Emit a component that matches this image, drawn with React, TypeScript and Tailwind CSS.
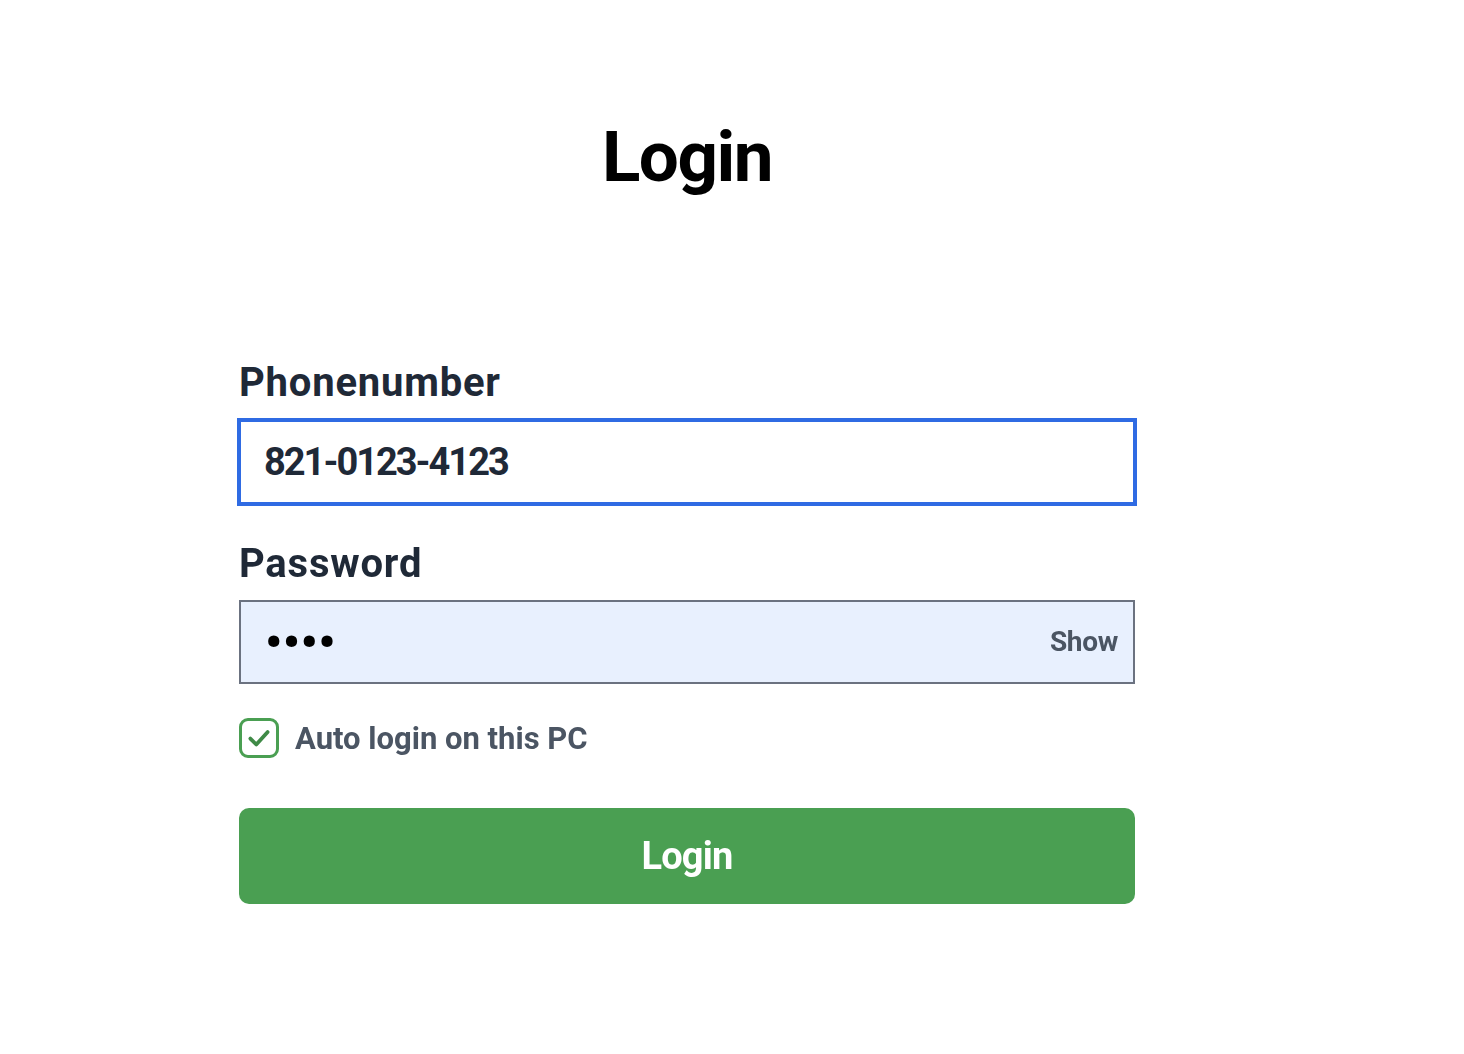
import { useState } from "react";

export default function App() {
    const [phone, setPhone] = useState("821-0123-4123");
    const [password, setPassword] = useState("1234");
    const [show, setShow] = useState(false);
    const [auto, setAuto] = useState(true);

    return (
        <div className="min-h-screen bg-white font-['Roboto','Noto_Sans_CJK_KR',sans-serif]">
            <div className="w-[896px] ml-[239px] pt-[121px] flex flex-col">
                {/* Title */}
                <h1 className="text-[71px] leading-none font-bold text-black text-center tracking-[-1.5px]">Login</h1>

                {/* Phone */}
                <label className="mt-[171px] text-[40px] leading-none font-bold text-[#1f2937] tracking-[0.8px]">Phonenumber</label>
                <input
                    autoFocus
                    value={phone}
                    onChange={(e) => setPhone(e.target.value)}
                    className="mt-[17px] h-[84px] w-full border-2 border-[#2f6be3] outline-2 outline-[#2f6be3] bg-white pl-[23px] pr-4 text-[38px] font-bold text-[#1f2937] tracking-[-2px] caret-[#1f2937]"
                />

                {/* Password */}
                <label className="mt-[40px] text-[40px] leading-none font-bold text-[#1f2937] tracking-[0.8px]">Password</label>
                <div className="mt-[16px] h-[84px] w-full border-2 border-[#6b7280] bg-[#e8f0fe] flex items-center">
                    <input
                        type={show ? "text" : "password"}
                        value={password}
                        onChange={(e) => setPassword(e.target.value)}
                        className="flex-1 h-full bg-transparent pl-[24px] text-[48px] font-bold text-black tracking-[0.5px] outline-none"
                    />
                    <button
                        type="button"
                        onClick={() => setShow(!show)}
                        className="pr-[15px] pl-3 text-[28px] leading-none font-bold text-[#4b5563] tracking-[-0.3px]"
                    >
                        {show ? "Hide" : "Show"}
                    </button>
                </div>

                {/* Auto login */}
                <label className="mt-[34px] flex items-center gap-[16px] cursor-pointer">
                    <button
                        type="button"
                        onClick={() => setAuto(!auto)}
                        className="w-[40px] h-[40px] rounded-[9px] border-[3px] border-[#4a9f52] bg-white flex items-center justify-center"
                    >
                        {auto && (
                            <svg width="26" height="26" viewBox="0 0 24 24" fill="none" stroke="#3f8a46" strokeWidth="3.5" strokeLinecap="round" strokeLinejoin="round">
                                <polyline points="4 12.5 9.5 18 20 6.5" />
                            </svg>
                        )}
                    </button>
                    <span className="text-[31px] leading-none font-bold text-[#4b5563] tracking-[0px]">Auto login on this PC</span>
                </label>

                {/* Submit */}
                <button
                    type="button"
                    className="mt-[50px] h-[96px] w-full rounded-[10px] bg-[#4a9f52] text-white text-[38px] font-bold tracking-[-0.8px]"
                >
                    Login
                </button>
            </div>
        </div>
    );
}
